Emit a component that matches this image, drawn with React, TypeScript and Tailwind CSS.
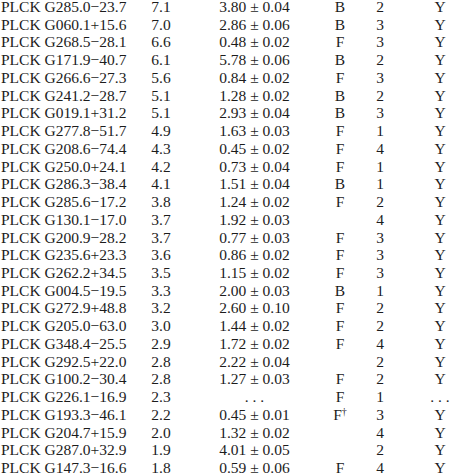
const ROWS: [string, string, string, string, string, string][] = [
  ["PLCK G285.0−23.7", "7.1", "3.80 ± 0.04", "B", "2", "Y"],
  ["PLCK G060.1+15.6", "7.0", "2.86 ± 0.06", "B", "3", "Y"],
  ["PLCK G268.5−28.1", "6.6", "0.48 ± 0.02", "F", "3", "Y"],
  ["PLCK G171.9−40.7", "6.1", "5.78 ± 0.06", "B", "2", "Y"],
  ["PLCK G266.6−27.3", "5.6", "0.84 ± 0.02", "F", "3", "Y"],
  ["PLCK G241.2−28.7", "5.1", "1.28 ± 0.02", "B", "2", "Y"],
  ["PLCK G019.1+31.2", "5.1", "2.93 ± 0.04", "B", "3", "Y"],
  ["PLCK G277.8−51.7", "4.9", "1.63 ± 0.03", "F", "1", "Y"],
  ["PLCK G208.6−74.4", "4.3", "0.45 ± 0.02", "F", "4", "Y"],
  ["PLCK G250.0+24.1", "4.2", "0.73 ± 0.04", "F", "1", "Y"],
  ["PLCK G286.3−38.4", "4.1", "1.51 ± 0.04", "B", "1", "Y"],
  ["PLCK G285.6−17.2", "3.8", "1.24 ± 0.02", "F", "2", "Y"],
  ["PLCK G130.1−17.0", "3.7", "1.92 ± 0.03", "", "4", "Y"],
  ["PLCK G200.9−28.2", "3.7", "0.77 ± 0.03", "F", "3", "Y"],
  ["PLCK G235.6+23.3", "3.6", "0.86 ± 0.02", "F", "3", "Y"],
  ["PLCK G262.2+34.5", "3.5", "1.15 ± 0.02", "F", "3", "Y"],
  ["PLCK G004.5−19.5", "3.3", "2.00 ± 0.03", "B", "1", "Y"],
  ["PLCK G272.9+48.8", "3.2", "2.60 ± 0.10", "F", "2", "Y"],
  ["PLCK G205.0−63.0", "3.0", "1.44 ± 0.02", "F", "2", "Y"],
  ["PLCK G348.4−25.5", "2.9", "1.72 ± 0.02", "F", "4", "Y"],
  ["PLCK G292.5+22.0", "2.8", "2.22 ± 0.04", "", "2", "Y"],
  ["PLCK G100.2−30.4", "2.8", "1.27 ± 0.03", "F", "2", "Y"],
  ["PLCK G226.1−16.9", "2.3", ". . .", "F", "1", ". . ."],
  ["PLCK G193.3−46.1", "2.2", "0.45 ± 0.01", "F†", "3", "Y"],
  ["PLCK G204.7+15.9", "2.0", "1.32 ± 0.02", "", "4", "Y"],
  ["PLCK G287.0+32.9", "1.9", "4.01 ± 0.05", "", "2", "Y"],
  ["PLCK G147.3−16.6", "1.8", "0.59 ± 0.06", "F", "4", "Y"],
];

function TypeCell({ v }: { v: string }) {
  if (v.endsWith("†")) {
    return (
      <span>
        F
        <span className="inline-block relative -top-[5px] text-[10px] leading-none">
          †
        </span>
      </span>
    );
  }
  return <span>{v}</span>;
}

export default function App() {
  return (
    <div className="w-[474px] h-[474px] overflow-hidden bg-white text-[#1c1c1c] font-['Liberation_Serif',serif] text-[15.5px] leading-[17.73px]">
      <div className="-mt-[2px] flex flex-col">
        {ROWS.map((r) => (
          <div key={r[0]} className="flex whitespace-nowrap">
            <div className="w-[140px] pl-[1px]">{r[0]}</div>
            <div className="w-[42px] text-center">{r[1]}</div>
            <div className="w-[145px] text-center">{r[2]}</div>
            <div className="w-[26px] text-center">
              <TypeCell v={r[3]} />
            </div>
            <div className="w-[54px] text-center">{r[4]}</div>
            <div className="w-[66px] text-center">{r[5]}</div>
          </div>
        ))}
      </div>
    </div>
  );
}
